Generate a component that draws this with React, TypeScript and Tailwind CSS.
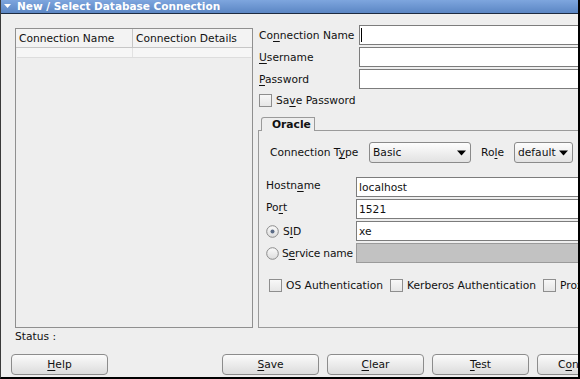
import React from "react";

const U = ({ children }: { children: React.ReactNode }) => <span className="underline underline-offset-[2px] decoration-1">{children}</span>;

function Check() {
  return <div className="w-[13px] h-[13px] shrink-0 border border-[#8e8e8e] bg-gradient-to-b from-[#f8f8f8] to-[#e6e6e6]" />;
}

function Radio({ on }: { on?: boolean }) {
  return (
    <svg width="13" height="13" viewBox="0 0 13 13" className="shrink-0">
      <defs>
        <linearGradient id={on ? "rg1" : "rg2"} x1="0" y1="0" x2="0" y2="1">
          <stop offset="0" stopColor="#fbfbfb" />
          <stop offset="1" stopColor="#dcdcdc" />
        </linearGradient>
      </defs>
      <circle cx="6.5" cy="6.5" r="5.8" fill={`url(#${on ? "rg1" : "rg2"})`} stroke="#8a8a8a" strokeWidth="1" />
      {on && <circle cx="6.5" cy="6.5" r="2" fill="#5b6b86" />}
    </svg>
  );
}

function Select({ w, label }: { w: string; label: string }) {
  return (
    <div className={`${w} h-[21px] shrink-0 flex items-center justify-between rounded-[3px] border border-[#8a8a8a] bg-gradient-to-b from-[#fdfdfd] to-[#e2e2e2] pl-[3px] pr-[4px]`}>
      <span className="whitespace-nowrap">{label}</span>
      <svg width="9" height="6" viewBox="0 0 9 6" className="shrink-0"><path d="M0 0.5 H9 L4.5 5.5 Z" fill="#000" /></svg>
    </div>
  );
}

function Btn({ children, cls = "justify-center" }: { children: React.ReactNode; cls?: string }) {
  return (
    <div className={`w-[97px] min-w-[97px] h-[21px] shrink-0 flex items-center ${cls} rounded-[4px] border border-[#8c8c8c] bg-gradient-to-b from-[#fbfbfb] to-[#dcdcdc]`}>
      <span className="whitespace-nowrap">{children}</span>
    </div>
  );
}

export default function App() {
  return (
    <div className="w-[580px] h-[379px] overflow-hidden bg-[#eeeeee] flex flex-col font-['DejaVu_Sans',sans-serif] text-[10.7px] leading-[13px] text-[#111] whitespace-nowrap border-l border-l-[#3a3a3a] border-r-2 border-r-black border-b-2 border-b-black">
      {/* Title bar */}
      <div className="h-[14px] shrink-0 flex items-center bg-gradient-to-b from-[#7ea6de] to-[#5b86c4] border-b border-b-[#1d2b40] text-white font-bold text-[10.5px] leading-[13px]">
        <svg width="7" height="5" viewBox="0 0 7 5" className="ml-[3px] mr-[6px]"><path d="M0 0 H7 L3.5 4 Z" fill="#fff" /></svg>
        <span>New / Select Database Connection</span>
      </div>

      {/* Main */}
      <div className="flex shrink-0 h-[315px]">
        {/* Left table */}
        <div className="ml-[14px] mt-[14px] w-[238px] h-[300px] shrink-0 border border-[#8f8f8f] flex flex-col">
          <div className="h-[19px] flex border-b border-b-[#c6c6c6] bg-[#f3f3f3]">
            <div className="w-[117px] border-r border-r-[#c6c6c6] pl-[3px] flex items-center">Connection Name</div>
            <div className="flex-1 pl-[3px] flex items-center">Connection Details</div>
          </div>
          <div className="h-[10px] flex border-b border-b-[#dddddd] bg-[#f6f6f6] mx-[1px]">
            <div className="w-[116px] border-r border-r-[#e2e2e2]" />
            <div className="flex-1" />
          </div>
        </div>

        {/* Right column */}
        <div className="ml-[5px] pt-[11px] flex-1 min-w-0 overflow-hidden flex flex-col">
          <div className="flex flex-col gap-[2px]">
            <div className="flex items-center h-[20px]">
              <div className="w-[101px] pl-[1px] shrink-0">Co<U>n</U>nection Name</div>
              <div className="w-[240px] h-[20px] shrink-0 border border-[#7c7c7c] bg-white relative">
                <div className="absolute left-[1px] top-[2px] w-px h-[14px] bg-black" />
              </div>
            </div>
            <div className="flex items-center h-[20px]">
              <div className="w-[101px] pl-[1px] shrink-0"><U>U</U>sername</div>
              <div className="w-[240px] h-[20px] shrink-0 border border-[#7c7c7c] bg-white" />
            </div>
            <div className="flex items-center h-[20px]">
              <div className="w-[101px] pl-[1px] shrink-0"><U>P</U>assword</div>
              <div className="w-[240px] h-[20px] shrink-0 border border-[#7c7c7c] bg-white" />
            </div>
          </div>
          <div className="mt-[4px] h-[14px] flex items-center pl-[1px] gap-[4px]">
            <Check />
            <span>Sa<U>v</U>e Password</span>
          </div>

          {/* Tab */}
          <div className="mt-[10px] flex">
            <div className="ml-[3px] w-[54px] h-[14px] -mb-px relative z-10 bg-[#eeeeee] border border-b-0 border-[#9a9a9a] rounded-tl-[3px] font-bold flex items-center pl-[10px]">Oracle</div>
          </div>
          <div className="w-[330px] h-[198px] shrink-0 border border-[#9a9a9a] border-r-0 flex flex-col">
            <div className="mt-[11px] pl-[11px] flex items-center">
              <div className="w-[99px] shrink-0">Connection T<U>y</U>pe</div>
              <Select w="w-[102px]" label="Basic" />
              <div className="ml-[10px] w-[33px] shrink-0">Ro<U>l</U>e</div>
              <Select w="w-[59px]" label="default" />
            </div>

            <div className="mt-[14px] pl-[7px] flex flex-col gap-[2px]">
              <div className="flex items-center h-[20px]">
                <div className="w-[90px] shrink-0 -mt-[3px]">Hostn<U>a</U>me</div>
                <div className="w-[240px] h-[20px] shrink-0 border border-[#7c7c7c] bg-white flex items-center pl-[2px]">localhost</div>
              </div>
              <div className="flex items-center h-[20px]">
                <div className="w-[90px] shrink-0 -mt-[4px]">Po<U>r</U>t</div>
                <div className="w-[240px] h-[20px] shrink-0 border border-[#7c7c7c] bg-white flex items-center pl-[2px]">1521</div>
              </div>
              <div className="flex items-center h-[20px]">
                <div className="w-[90px] shrink-0 flex items-center gap-[4px]"><Radio on /><span>S<U>I</U>D</span></div>
                <div className="w-[240px] h-[20px] shrink-0 border border-[#7c7c7c] bg-white flex items-center pl-[2px]">xe</div>
              </div>
              <div className="flex items-center h-[20px]">
                <div className="w-[90px] shrink-0 flex items-center gap-[3px] tracking-[-0.2px]"><Radio /><span>S<U>e</U>rvice name</span></div>
                <div className="w-[240px] h-[20px] shrink-0 border border-[#9a9a9a] bg-[#c2c2c2]" />
              </div>
            </div>

            <div className="mt-[16px] pl-[10px] flex items-center">
              <Check />
              <span className="ml-[4px] shrink-0">OS Authentication</span>
              <div className="ml-[7px] shrink-0"><Check /></div>
              <span className="ml-[4px] shrink-0">Kerberos Authentication</span>
              <div className="ml-[7px] shrink-0"><Check /></div>
              <span className="ml-[4px] shrink-0">Proxy Connection</span>
            </div>
          </div>
        </div>
      </div>

      {/* Status */}
      <div className="pl-[14px] h-[14px] flex items-center">Status :</div>

      {/* Buttons */}
      <div className="mt-[11px] flex items-center">
        <div className="ml-[10px] shrink-0"><Btn><U>H</U>elp</Btn></div>
        <div className="ml-[114px] shrink-0 flex gap-[8px]">
          <Btn><U>S</U>ave</Btn>
          <Btn><U>C</U>lear</Btn>
          <Btn><U>T</U>est</Btn>
          <Btn cls="justify-start pl-[20px]">C<U>o</U>nnect</Btn>
        </div>
      </div>
    </div>
  );
}
